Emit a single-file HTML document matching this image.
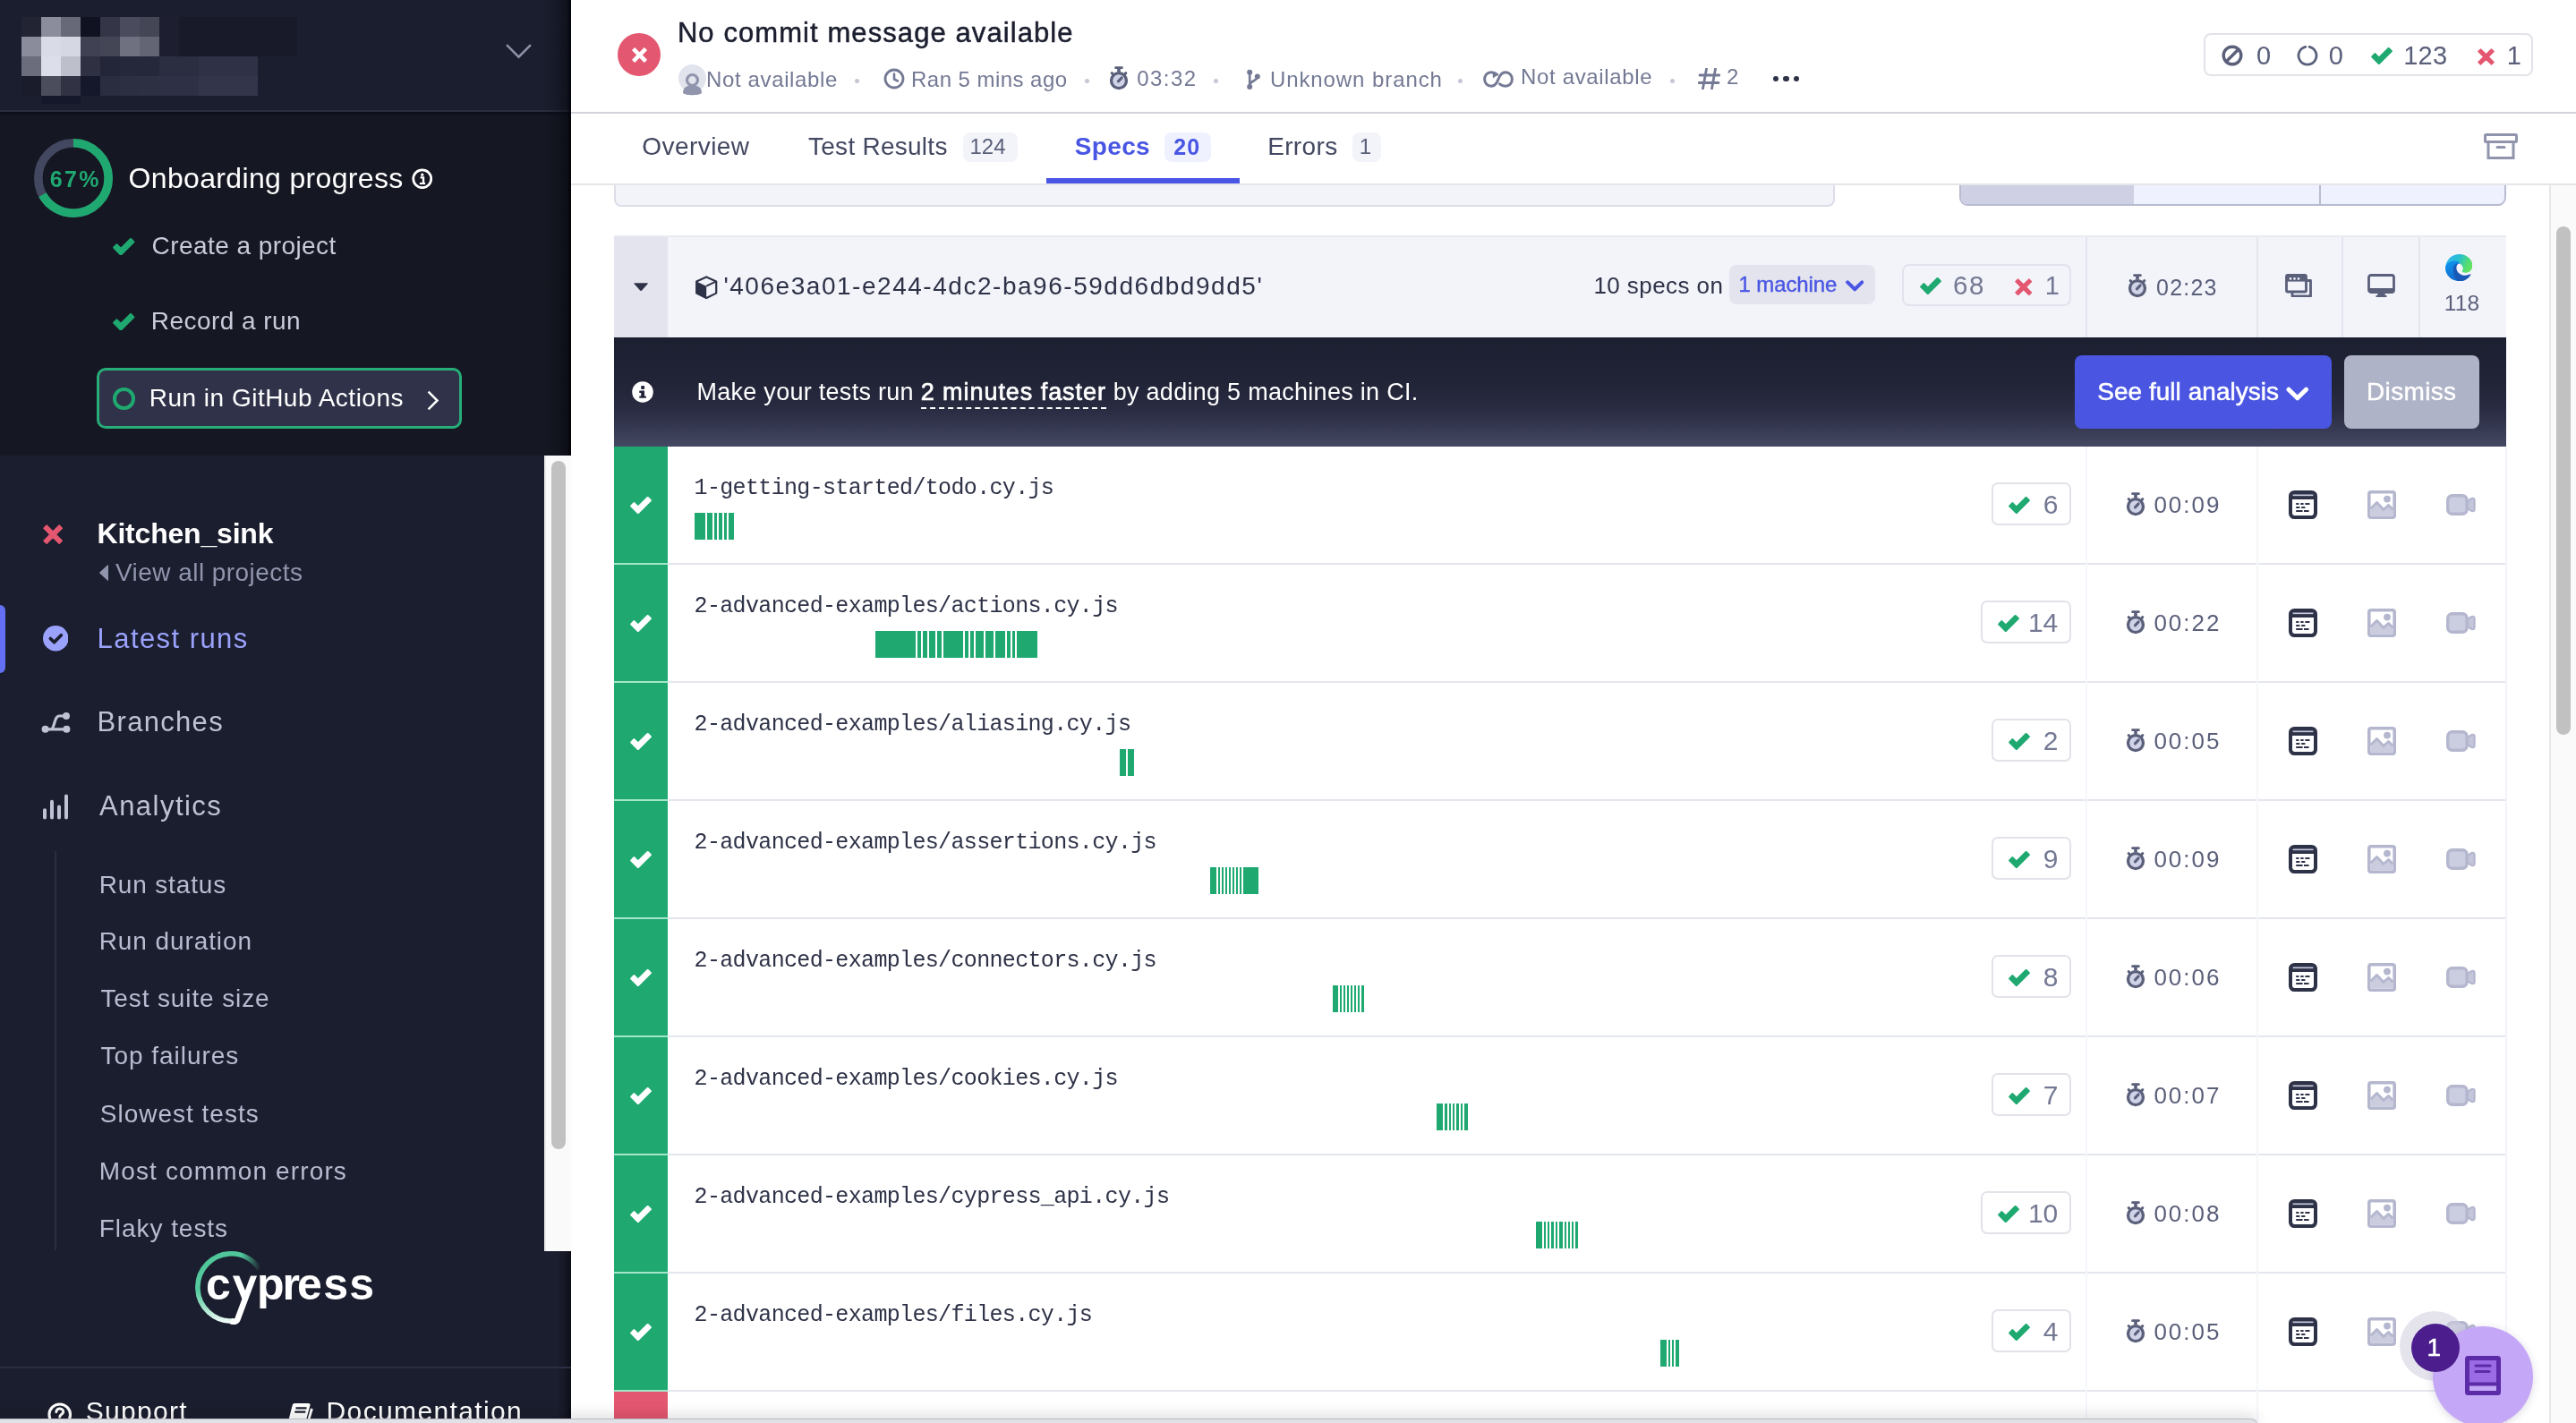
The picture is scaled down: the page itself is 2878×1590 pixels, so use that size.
<!DOCTYPE html><html><head><meta charset="utf-8"><title>Cypress Cloud</title><style>
*{box-sizing:border-box;margin:0;padding:0}
html,body{width:2878px;height:1590px;overflow:hidden;background:#fff}
body{font-family:"Liberation Sans",sans-serif;position:relative;will-change:transform}
.a{position:absolute;display:block}
.t{position:absolute;white-space:pre}
</style></head><body>
<div class="a" id="main" style="left:638px;top:0;width:2240px;height:1590px;background:#fff;overflow:hidden">
</div>
<div class="a" style="left:638px;top:125px;width:2240px;height:2px;background:#d2d3da"></div>
<div class="a" style="left:690px;top:37px;width:48px;height:48px;border-radius:50%;background:#e45770"></div>
<svg class="a" style="left:705.5px;top:52.5px;" width="17" height="17" viewBox="0 0 14 14"><path d="M2.6 0.6 L7 5 L11.4 0.6 L13.4 2.6 L9 7 L13.4 11.4 L11.4 13.4 L7 9 L2.6 13.4 L0.6 11.4 L5 7 L0.6 2.6 Z" fill="#fff" stroke="#fff" stroke-width="0.9" stroke-linejoin="round"/></svg>
<div class="t" style="left:756.92px;top:17.3px;line-height:40px;font-size:31px;color:#1b1e2e;letter-spacing:1.08px;font-weight:400;-webkit-text-stroke:0.5px #1b1e2e;">No commit message available</div>
<div class="a" style="left:758px;top:72px;width:31px;height:31px;border-radius:50%;background:#e1e3ed"></div>
<svg class="a" style="left:761px;top:80px;" width="25" height="28" viewBox="0 0 25 28"><circle cx="12.5" cy="9.5" r="6" fill="#e1e3ed" stroke="#9095ad" stroke-width="3.2"/><path d="M2 24 C2 17 7 15.5 12.5 15.5 C18 15.5 23 17 23 24 C20 27 5 27 2 24 Z" fill="#9095ad"/></svg>
<div class="t" style="left:789.08px;top:68.5px;line-height:40px;font-size:24px;color:#747994;letter-spacing:0.62px;font-weight:400;">Not available</div>
<div class="a" style="left:954.9px;top:87.5px;width:5px;height:5px;border-radius:50%;background:#c5c7d6"></div>
<svg class="a" style="left:987px;top:75.5px;" width="24" height="24" viewBox="0 0 24 24"><circle cx="12" cy="12" r="10" fill="none" stroke="#747994" stroke-width="2.8"/><path d="M12 6.5 V12.5 L16 14.5" fill="none" stroke="#747994" stroke-width="2.6" stroke-linecap="round" stroke-linejoin="round"/></svg>
<div class="t" style="left:1018.08px;top:68.5px;line-height:40px;font-size:24px;color:#747994;letter-spacing:0.45px;font-weight:400;">Ran 5 mins ago</div>
<div class="a" style="left:1211.5px;top:87.5px;width:5px;height:5px;border-radius:50%;background:#c5c7d6"></div>
<svg class="a" style="left:1239px;top:73.5px;" width="22.0" height="27.0" viewBox="0 0 22 27"><rect x="6.2" y="0.3" width="9.6" height="2.8" rx="1.3" fill="#5a5f7a"/><rect x="9.2" y="1.5" width="3.6" height="5" fill="#5a5f7a"/><path d="M3.2 7.6 L4.6 9 M18.8 7.6 L17.4 9" stroke="#5a5f7a" stroke-width="3" stroke-linecap="round"/><circle cx="11" cy="16.1" r="8.5" fill="#d0d3e8" stroke="#5a5f7a" stroke-width="3.3"/><path d="M10.4 16.9 L14.2 12.9" stroke="#5a5f7a" stroke-width="3" stroke-linecap="round"/></svg>
<div class="t" style="left:1270.16px;top:68.3px;line-height:40px;font-size:24px;color:#747994;letter-spacing:1.48px;font-weight:400;">03:32</div>
<div class="a" style="left:1355.5px;top:87.5px;width:5px;height:5px;border-radius:50%;background:#c5c7d6"></div>
<svg class="a" style="left:1391.5px;top:77px;" width="17" height="24" viewBox="0 0 17 24"><circle cx="4.2" cy="3.8" r="3" fill="#747994"/><circle cx="4.2" cy="20" r="3" fill="#747994"/><circle cx="12.8" cy="8.6" r="3" fill="#747994"/><path d="M4.2 3.8 V20 M12.8 8.6 C12.8 14 4.2 13 4.2 18" fill="none" stroke="#747994" stroke-width="2.6"/></svg>
<div class="t" style="left:1418.9px;top:68.5px;line-height:40px;font-size:24px;color:#747994;letter-spacing:0.92px;font-weight:400;">Unknown branch</div>
<div class="a" style="left:1629.2px;top:87.5px;width:5px;height:5px;border-radius:50%;background:#c5c7d6"></div>
<svg class="a" style="left:1657px;top:79px;" width="34" height="19" viewBox="0 0 34 19"><path d="M15.5 4.2 C13.6 2.6 11.4 1.8 9 1.8 C4.6 1.8 1.6 5.2 1.6 9.5 C1.6 13.8 4.8 17.2 9 17.2 C13 17.2 15.2 14.6 17 9.5 C18.8 4.4 21 1.8 25 1.8 C29.2 1.8 32.4 5.2 32.4 9.5 C32.4 13.8 29.4 17.2 25 17.2 C22.6 17.2 20.4 16.4 18.5 14.8" fill="none" stroke="#747994" stroke-width="3" stroke-linecap="round"/><path d="M10.5 1 L16.5 4.6 L11 8.6 Z" fill="#747994"/></svg>
<div class="t" style="left:1699.08px;top:66.0px;line-height:40px;font-size:24px;color:#747994;letter-spacing:0.65px;font-weight:400;">Not available</div>
<div class="a" style="left:1865.5px;top:87.5px;width:5px;height:5px;border-radius:50%;background:#c5c7d6"></div>
<svg class="a" style="left:1897px;top:76px;" width="25" height="24" viewBox="0 0 25 24"><path d="M9.5 1 L5.5 23 M19.5 1 L15.5 23 M2 8 H24 M1 16.5 H23" fill="none" stroke="#747994" stroke-width="2.8" stroke-linecap="round"/></svg>
<div class="t" style="left:1929.1px;top:65.6px;line-height:40px;font-size:24px;color:#747994;letter-spacing:0px;font-weight:400;">2</div>
<div class="a" style="left:1980.5px;top:84.9px;width:6.6px;height:6.6px;border-radius:50%;background:#2e3247"></div>
<div class="a" style="left:1992.1000000000001px;top:84.9px;width:6.6px;height:6.6px;border-radius:50%;background:#2e3247"></div>
<div class="a" style="left:2003.7px;top:84.9px;width:6.6px;height:6.6px;border-radius:50%;background:#2e3247"></div>
<div class="a" style="left:2462px;top:37px;width:368px;height:48px;border:2px solid #e2e3e8;border-radius:8px;background:#fff"></div>
<svg class="a" style="left:2482px;top:49.7px;" width="24" height="24" viewBox="0 0 24 24"><circle cx="12" cy="12" r="9.8" fill="none" stroke="#5a5f7a" stroke-width="3.4"/><path d="M5.5 18.5 L18.5 5.5" stroke="#5a5f7a" stroke-width="3.4"/></svg>
<div class="t" style="left:2520.99px;top:42.0px;line-height:40px;font-size:29px;color:#5a5f7a;letter-spacing:0px;font-weight:400;">0</div>
<svg class="a" style="left:2565.5px;top:50px;" width="24" height="24" viewBox="0 0 24 24"><path d="M14.2 2.4 A10 10 0 1 1 9.8 2.4" fill="none" stroke="#5a5f7a" stroke-width="2.8" stroke-linecap="round"/></svg>
<div class="t" style="left:2601.68px;top:42.0px;line-height:40px;font-size:29px;color:#5a5f7a;letter-spacing:0px;font-weight:400;">0</div>
<svg class="a" style="left:2649px;top:52.5px;" width="24" height="19.2" viewBox="0 0 16 12.8"><path d="M0.9 7 L2.9 4.9 L5.9 7.9 L13.1 0.8 L15.1 2.8 L5.9 12 Z" fill="#1fa971" stroke="#1fa971" stroke-width="1.6" stroke-linejoin="round"/></svg>
<div class="t" style="left:2685.22px;top:42.0px;line-height:40px;font-size:29px;color:#5a5f7a;letter-spacing:0.2px;font-weight:400;">123</div>
<svg class="a" style="left:2767.5px;top:53.5px;" width="19" height="19" viewBox="0 0 14 14"><path d="M2.6 0.6 L7 5 L11.4 0.6 L13.4 2.6 L9 7 L13.4 11.4 L11.4 13.4 L7 9 L2.6 13.4 L0.6 11.4 L5 7 L0.6 2.6 Z" fill="#e45770" stroke="#e45770" stroke-width="0.9" stroke-linejoin="round"/></svg>
<div class="t" style="left:2800.82px;top:42.0px;line-height:40px;font-size:29px;color:#5a5f7a;letter-spacing:0px;font-weight:400;">1</div>
<div class="t" style="left:717.24px;top:144.0px;line-height:40px;font-size:28px;color:#434861;letter-spacing:0.45px;font-weight:400;">Overview</div>
<div class="t" style="left:903.04px;top:144.0px;line-height:40px;font-size:28px;color:#434861;letter-spacing:0.26px;font-weight:400;">Test Results</div>
<div class="a" style="left:1075.5px;top:148px;width:61px;height:32.5px;border-radius:8px;background:#f3f4fa"></div><div class="t" style="left:1083.5px;top:144.2px;line-height:40px;font-size:24px;color:#5a5f7a;letter-spacing:0px;font-weight:400;">124</div>
<div class="t" style="left:1200.8px;top:144.0px;line-height:40px;font-size:28px;color:#4956e3;letter-spacing:0.34px;font-weight:700;">Specs</div>
<div class="a" style="left:1301px;top:148px;width:52px;height:32.5px;border-radius:8px;background:#f0f1ff"></div><div class="t" style="left:1311.25px;top:144.2px;line-height:40px;font-size:25px;color:#4956e3;letter-spacing:1.0px;font-weight:700;">20</div>
<div class="t" style="left:1416.16px;top:144.0px;line-height:40px;font-size:28px;color:#434861;letter-spacing:0.35px;font-weight:400;">Errors</div>
<div class="a" style="left:1510.8px;top:148px;width:32px;height:32.5px;border-radius:8px;background:#f3f4fa"></div><div class="t" style="left:1518.7px;top:144.2px;line-height:40px;font-size:24px;color:#5a5f7a;letter-spacing:0px;font-weight:400;">1</div>
<div class="a" style="left:638px;top:205px;width:2240px;height:2px;background:#e6e6ea"></div>
<div class="a" style="left:1169px;top:199px;width:216px;height:6.4px;background:#4956e3"></div>
<svg class="a" style="left:2775px;top:149px;" width="38" height="29" viewBox="0 0 38 29"><rect x="1.5" y="1.5" width="35" height="8" rx="1" fill="none" stroke="#9095ad" stroke-width="3"/><path d="M5 9.5 V27.5 H33 V9.5" fill="none" stroke="#9095ad" stroke-width="3"/><path d="M15 15.5 H23" stroke="#9095ad" stroke-width="3" stroke-linecap="round"/></svg>
<div class="a" style="left:686px;top:190px;width:1364px;height:41px;border:2px solid #dcdde8;border-radius:8px;background:#f3f4fa;clip-path:inset(17px 0 0 0)"></div>
<div class="a" style="left:2189px;top:180px;width:611px;height:50px;border:2px solid #b9bcd0;border-radius:9px;background:#f0f1ff;overflow:hidden;clip-path:inset(27px 0 0 0)"><div class="a" style="left:-2px;top:-2px;width:195px;height:50px;background:#cfd0e3"></div><div class="a" style="left:399.5px;top:-2px;width:2px;height:50px;background:#b9bcd0"></div></div>
<div class="a" style="left:686px;top:263px;width:2114px;height:114px;background:#f3f4fa;border-top:2px solid #e9eaf1"></div>
<div class="a" style="left:686px;top:265px;width:60px;height:112px;background:#e3e4ee"></div>
<svg class="a" style="left:708px;top:316.2px;" width="16.2" height="9.4" viewBox="0 0 18 10.5"><path d="M1 0.3 H17 Q18.3 0.3 17.4 1.3 L9.8 9.8 Q9 10.6 8.2 9.8 L0.6 1.3 Q-0.3 0.3 1 0.3 Z" fill="#2e3247"/></svg>
<svg class="a" style="left:775.6px;top:307.6px;" width="26.4" height="26.4" viewBox="0 0 27 28"><path d="M13.5 1.5 L25.2 6.8 V20.8 L13.5 26.6 L1.8 20.8 V6.8 Z" fill="#f3f4fa" stroke="#2e3247" stroke-width="2.3" stroke-linejoin="round"/><path d="M1.8 6.8 L13.5 12.4 V26.6 L1.8 20.8 Z" fill="#2e3247"/><path d="M13.5 12.4 L25.2 6.8" stroke="#2e3247" stroke-width="2.2"/></svg>
<div class="t" style="left:808.4px;top:300.2px;line-height:40px;font-size:28px;color:#2e3247;letter-spacing:1.53px;font-weight:400;">&#x27;406e3a01-e244-4dc2-ba96-59dd6dbd9dd5&#x27;</div>
<div class="t" style="left:1780.45px;top:298.6px;line-height:40px;font-size:26px;color:#2e3247;letter-spacing:0.42px;font-weight:400;">10 specs on</div>
<div class="a" style="left:1932px;top:296px;width:163px;height:44px;border-radius:8px;background:#e3e4ee"></div>
<div class="t" style="left:1942.5px;top:298.4px;line-height:40px;font-size:24px;color:#4956e3;letter-spacing:-0.1px;font-weight:400;-webkit-text-stroke:0.4px #4956e3;">1 machine</div>
<svg class="a" style="left:2061.5px;top:313px;" width="20.5" height="13" viewBox="0 0 20.5 13"><path d="M2.2 2.4 L10.25 10.3 L18.3 2.4" fill="none" stroke="#4956e3" stroke-width="4" stroke-linecap="round" stroke-linejoin="round"/></svg>
<div class="a" style="left:2125px;top:294.5px;width:189px;height:47px;border:2px solid #e1e3ed;border-radius:8px"></div>
<svg class="a" style="left:2144.5px;top:310px;" width="24" height="19.2" viewBox="0 0 16 12.8"><path d="M0.9 7 L2.9 4.9 L5.9 7.9 L13.1 0.8 L15.1 2.8 L5.9 12 Z" fill="#1fa971" stroke="#1fa971" stroke-width="1.6" stroke-linejoin="round"/></svg>
<div class="t" style="left:2182.12px;top:299.4px;line-height:40px;font-size:29.5px;color:#747994;letter-spacing:1.5px;font-weight:400;">68</div>
<svg class="a" style="left:2251px;top:310.5px;" width="19.5" height="19.5" viewBox="0 0 14 14"><path d="M2.6 0.6 L7 5 L11.4 0.6 L13.4 2.6 L9 7 L13.4 11.4 L11.4 13.4 L7 9 L2.6 13.4 L0.6 11.4 L5 7 L0.6 2.6 Z" fill="#e45770" stroke="#e45770" stroke-width="0.9" stroke-linejoin="round"/></svg>
<div class="t" style="left:2284.82px;top:299.4px;line-height:40px;font-size:29px;color:#747994;letter-spacing:0px;font-weight:400;">1</div>
<div class="a" style="left:2330px;top:265px;width:2px;height:112px;background:#e4e5ee"></div>
<div class="a" style="left:2520.5px;top:265px;width:2px;height:112px;background:#e4e5ee"></div>
<div class="a" style="left:2616.2px;top:265px;width:2px;height:112px;background:#e4e5ee"></div>
<div class="a" style="left:2701.5px;top:265px;width:2px;height:112px;background:#e4e5ee"></div>
<svg class="a" style="left:2377px;top:305.6px;" width="22.0" height="27.0" viewBox="0 0 22 27"><rect x="6.2" y="0.3" width="9.6" height="2.8" rx="1.3" fill="#5a5f7a"/><rect x="9.2" y="1.5" width="3.6" height="5" fill="#5a5f7a"/><path d="M3.2 7.6 L4.6 9 M18.8 7.6 L17.4 9" stroke="#5a5f7a" stroke-width="3" stroke-linecap="round"/><circle cx="11" cy="16.1" r="8.5" fill="#d0d3e8" stroke="#5a5f7a" stroke-width="3.3"/><path d="M10.4 16.9 L14.2 12.9" stroke="#5a5f7a" stroke-width="3" stroke-linecap="round"/></svg>
<div class="t" style="left:2409.12px;top:301.2px;line-height:40px;font-size:25px;color:#5a5f7a;letter-spacing:1.18px;font-weight:400;">02:23</div>
<svg class="a" style="left:2553px;top:305.5px;" width="30" height="26.5" viewBox="0 0 30 26.5"><path d="M8 21 V25 H28.5 V7.5 H25" fill="none" stroke="#5a5f7a" stroke-width="2.8" stroke-linejoin="round"/><rect x="1.5" y="1.5" width="22" height="18.5" rx="1.5" fill="#f3f4fa" stroke="#5a5f7a" stroke-width="2.8"/><path d="M1.5 3 H23.5 V8.6 H1.5 Z" fill="#5a5f7a"/><circle cx="6" cy="5.4" r="1.3" fill="#f3f4fa"/><circle cx="10.5" cy="5.4" r="1.3" fill="#f3f4fa"/><circle cx="15" cy="5.4" r="1.3" fill="#f3f4fa"/></svg>
<svg class="a" style="left:2644.5px;top:305.5px;" width="31" height="26.5" viewBox="0 0 31 26.5"><rect x="1.5" y="1.5" width="28" height="19" rx="2.5" fill="#f3f4fa" stroke="#5a5f7a" stroke-width="2.8"/><path d="M1.5 16 H29.5 V19 Q29.5 20.5 28 20.5 H3 Q1.5 20.5 1.5 19 Z" fill="#5a5f7a"/><path d="M12 21 L11 24 H9.5 V26.3 H21.5 V24 H20 L19 21 Z" fill="#5a5f7a"/></svg>
<div class="t" style="left:2730.66px;top:319.0px;line-height:40px;font-size:24.5px;color:#5a5f7a;letter-spacing:0.25px;font-weight:400;">118</div>
<svg class="a" style="left:2731.8px;top:283.6px" width="30.4" height="30.4" viewBox="0 0 30 30">
<defs>
<linearGradient id="e1" x1="0" y1="0.2" x2="1" y2="0.55"><stop offset="0" stop-color="#36b4f2"/><stop offset="0.45" stop-color="#27bfd0"/><stop offset="0.8" stop-color="#52dc78"/><stop offset="1" stop-color="#64e35f"/></linearGradient>
<linearGradient id="e2" x1="0.2" y1="0" x2="0.6" y2="1"><stop offset="0" stop-color="#0e95ef"/><stop offset="1" stop-color="#1466c8"/></linearGradient>
</defs>
<path d="M0.4 13 C1.6 5.2 8 0 15.4 0 C24 0 30 6.2 30 12.6 C30 17.6 26.2 20.4 22.2 20.4 C19.6 20.4 18 19.6 18.6 18.6 C19.8 17 19.9 14.6 18.4 12.6 C16.6 10.2 13.6 9.2 10.4 9.4 C5.6 9.7 1.6 12.4 0.4 13 Z" fill="url(#e1)"/>
<path d="M0.2 13.4 C1.8 9.4 6.2 7.2 10.6 7.4 C13.4 7.5 15.4 8.6 16.2 10.2 C12 10.6 9.4 14 9.6 18 C9.9 23.6 14.6 28 20.6 29 C11.6 32 1 26.4 0.05 16.4 C0 15.4 0.05 14.4 0.2 13.4 Z" fill="url(#e2)"/>
<path d="M8.8 16.4 C8.7 12.6 11.6 9.9 14.6 10 C12.2 12 11.6 15.2 13 18.2 C15 22.4 20.4 24.6 25.4 22.8 C26.8 22.3 27.8 21.6 28.2 22.2 C26.2 27 21 30.1 15.8 29.9 C11 29 8.9 22.4 8.8 16.4 Z" fill="#1a58b6"/>
</svg>
<div class="a" style="left:686px;top:377px;width:2114px;height:122px;background:linear-gradient(180deg,#1c1f30 0%,#222538 45%,#2b2e44 70%,#3d415a 92%,#454963 100%)"></div>
<svg class="a" style="left:706px;top:426.4px;" width="24" height="24" viewBox="0 0 24 24"><circle cx="12" cy="12" r="11.8" fill="#fff"/><rect x="10.2" y="5" width="3.9" height="3.9" rx="1.2" fill="#22253a"/><path d="M8.3 10.6 H14 V16.4 H15.8 V18.8 H8.3 V16.4 H10.2 V13 H8.3 Z" fill="#22253a"/></svg>
<div class="t" style="left:778.44px;top:417.8px;line-height:40px;font-size:27px;color:#fff;letter-spacing:0.28px;font-weight:400;">Make your tests run <span style="font-weight:400;-webkit-text-stroke:0.7px #fff;letter-spacing:0.95px;border-bottom:2.5px dashed #fff;padding-bottom:0px;display:inline-block;line-height:33px">2 minutes faster</span> by adding 5 machines in CI.</div>
<div class="a" style="left:2318px;top:397px;width:287px;height:82px;border-radius:8px;background:#4a56e2"></div>
<div class="t" style="left:2343.24px;top:418.0px;line-height:40px;font-size:28px;color:#fff;letter-spacing:0.03px;font-weight:400;-webkit-text-stroke:0.5px #fff;">See full analysis</div>
<svg class="a" style="left:2553.5px;top:431.5px;" width="25.5" height="16.5" viewBox="0 0 25.5 16.5"><path d="M3 3.2 L12.75 12.8 L22.5 3.2" fill="none" stroke="#fff" stroke-width="5" stroke-linecap="round" stroke-linejoin="round"/></svg>
<div class="a" style="left:2619px;top:397px;width:151px;height:82px;border-radius:8px;background:#afb3c7"></div>
<div class="t" style="left:2644.06px;top:418.0px;line-height:40px;font-size:28px;color:#fff;letter-spacing:0.33px;font-weight:400;-webkit-text-stroke:0.4px #fff;">Dismiss</div>
<div class="a" style="left:686px;top:499px;width:60px;height:132px;background:#1fa971;border-bottom:2px solid #a5e6cb"></div>
<div class="a" style="left:746px;top:629px;width:2054px;height:2px;background:#e4e6ee"></div>
<svg class="a" style="left:704px;top:555px;" width="24" height="19.2" viewBox="0 0 16 12.8"><path d="M0.9 7 L2.9 4.9 L5.9 7.9 L13.1 0.8 L15.1 2.8 L5.9 12 Z" fill="#fff" stroke="#fff" stroke-width="1.6" stroke-linejoin="round"/></svg>
<div class="t" style="left:775.6px;top:525.7px;line-height:40px;font-family:'Liberation Mono',monospace;font-size:25px;letter-spacing:-0.66px;color:#2e3247">1-getting-started/todo.cy.js</div>
<div class="a" style="left:776px;top:573px;width:12px;height:30px;background:#1fa971"></div>
<div class="a" style="left:790px;top:573px;width:6px;height:30px;background:#1fa971"></div>
<div class="a" style="left:798px;top:573px;width:3px;height:30px;background:#1fa971"></div>
<div class="a" style="left:803px;top:573px;width:4px;height:30px;background:#1fa971"></div>
<div class="a" style="left:809px;top:573px;width:3px;height:30px;background:#1fa971"></div>
<div class="a" style="left:814px;top:573px;width:6px;height:30px;background:#1fa971"></div>
<div class="a" style="left:2224.7px;top:539.3px;width:89px;height:47.4px;border:2px solid #e2e3e9;border-radius:7px;background:#fff"></div>
<svg class="a" style="left:2243.8999999999996px;top:555px;" width="24" height="19.2" viewBox="0 0 16 12.8"><path d="M0.9 7 L2.9 4.9 L5.9 7.9 L13.1 0.8 L15.1 2.8 L5.9 12 Z" fill="#1fa971" stroke="#1fa971" stroke-width="1.6" stroke-linejoin="round"/></svg>
<div class="t" style="right:578.6999999999998px;top:544.4px;line-height:40px;font-size:30px;color:#747994;letter-spacing:0px">6</div>
<svg class="a" style="left:2375px;top:549.7px;" width="22.0" height="27.0" viewBox="0 0 22 27"><rect x="6.2" y="0.3" width="9.6" height="2.8" rx="1.3" fill="#5a5f7a"/><rect x="9.2" y="1.5" width="3.6" height="5" fill="#5a5f7a"/><path d="M3.2 7.6 L4.6 9 M18.8 7.6 L17.4 9" stroke="#5a5f7a" stroke-width="3" stroke-linecap="round"/><circle cx="11" cy="16.1" r="8.5" fill="#d0d3e8" stroke="#5a5f7a" stroke-width="3.3"/><path d="M10.4 16.9 L14.2 12.9" stroke="#5a5f7a" stroke-width="3" stroke-linecap="round"/></svg>
<div class="t" style="left:2406.39px;top:544.4px;line-height:40px;font-size:26px;color:#5a5f7a;letter-spacing:2.0px;font-weight:400;">00:09</div>
<svg class="a" style="left:2557px;top:548px;" width="32" height="32" viewBox="0 0 32 32"><rect x="2" y="2" width="28" height="28" rx="4.4" fill="#fff" stroke="#2e3247" stroke-width="4"/><path d="M2 4 H30 V10 H2 Z" fill="#2e3247"/><path d="M4.6 5.3 H27.4" stroke="#c5c7dc" stroke-width="1.7"/><path d="M8.2 14.9 H11.4 M13.3 14.9 H16.6 M18.4 14.9 H23.5 M8.2 19 H12.4 M14.2 19 H18.4 M8.2 23 H15.6 M17 23 H22.6" stroke="#2e3247" stroke-width="2"/></svg>
<svg class="a" style="left:2645px;top:548px;" width="32" height="32" viewBox="0 0 32 32"><rect x="1.8" y="1.8" width="28.4" height="28.4" rx="2.2" fill="#fff" stroke="#b4b7ce" stroke-width="3.6"/><path d="M3.5 22 L10.5 14.5 L17.5 22 L23.5 17 L28.5 22.5 V28.5 H3.5 Z" fill="#cbcddf"/><path d="M3.5 20.5 L10.5 13.5 L18 21.5 L23.5 16.5 L28.5 21.5" fill="none" stroke="#b4b7ce" stroke-width="3" stroke-linejoin="round"/><circle cx="22" cy="9.6" r="3.9" fill="#b4b7ce"/></svg>
<svg class="a" style="left:2732.6px;top:552px;" width="33" height="24" viewBox="0 0 33 24"><path d="M23.5 8.2 L28.5 5 Q31.6 4.2 31.6 7 V17 Q31.6 19.8 28.5 19 L23.5 15.8 Z" fill="#c4c6da" stroke="#b4b7ce" stroke-width="2.2" stroke-linejoin="round"/><rect x="1.7" y="1.7" width="21.4" height="20.6" rx="5" fill="#cbcde0" stroke="#b4b7ce" stroke-width="3.4"/></svg>
<div class="a" style="left:686px;top:631px;width:60px;height:132px;background:#1fa971;border-bottom:2px solid #a5e6cb"></div>
<div class="a" style="left:746px;top:761px;width:2054px;height:2px;background:#e4e6ee"></div>
<svg class="a" style="left:704px;top:687px;" width="24" height="19.2" viewBox="0 0 16 12.8"><path d="M0.9 7 L2.9 4.9 L5.9 7.9 L13.1 0.8 L15.1 2.8 L5.9 12 Z" fill="#fff" stroke="#fff" stroke-width="1.6" stroke-linejoin="round"/></svg>
<div class="t" style="left:775.6px;top:657.7px;line-height:40px;font-family:'Liberation Mono',monospace;font-size:25px;letter-spacing:-0.66px;color:#2e3247">2-advanced-examples/actions.cy.js</div>
<div class="a" style="left:978px;top:705px;width:45px;height:30px;background:#1fa971"></div>
<div class="a" style="left:1025px;top:705px;width:4px;height:30px;background:#1fa971"></div>
<div class="a" style="left:1031px;top:705px;width:5px;height:30px;background:#1fa971"></div>
<div class="a" style="left:1038px;top:705px;width:7px;height:30px;background:#1fa971"></div>
<div class="a" style="left:1047px;top:705px;width:5px;height:30px;background:#1fa971"></div>
<div class="a" style="left:1054px;top:705px;width:22px;height:30px;background:#1fa971"></div>
<div class="a" style="left:1078px;top:705px;width:4px;height:30px;background:#1fa971"></div>
<div class="a" style="left:1084px;top:705px;width:4px;height:30px;background:#1fa971"></div>
<div class="a" style="left:1090px;top:705px;width:8.5px;height:30px;background:#1fa971"></div>
<div class="a" style="left:1100.5px;top:705px;width:9px;height:30px;background:#1fa971"></div>
<div class="a" style="left:1111.5px;top:705px;width:11px;height:30px;background:#1fa971"></div>
<div class="a" style="left:1124.5px;top:705px;width:4px;height:30px;background:#1fa971"></div>
<div class="a" style="left:1130.5px;top:705px;width:3px;height:30px;background:#1fa971"></div>
<div class="a" style="left:1135.5px;top:705px;width:23px;height:30px;background:#1fa971"></div>
<div class="a" style="left:2212.7px;top:671.3px;width:101px;height:47.4px;border:2px solid #e2e3e9;border-radius:7px;background:#fff"></div>
<svg class="a" style="left:2231.8999999999996px;top:687px;" width="24" height="19.2" viewBox="0 0 16 12.8"><path d="M0.9 7 L2.9 4.9 L5.9 7.9 L13.1 0.8 L15.1 2.8 L5.9 12 Z" fill="#1fa971" stroke="#1fa971" stroke-width="1.6" stroke-linejoin="round"/></svg>
<div class="t" style="right:578.6999999999998px;top:676.4px;line-height:40px;font-size:30px;color:#747994;letter-spacing:0px">14</div>
<svg class="a" style="left:2375px;top:681.7px;" width="22.0" height="27.0" viewBox="0 0 22 27"><rect x="6.2" y="0.3" width="9.6" height="2.8" rx="1.3" fill="#5a5f7a"/><rect x="9.2" y="1.5" width="3.6" height="5" fill="#5a5f7a"/><path d="M3.2 7.6 L4.6 9 M18.8 7.6 L17.4 9" stroke="#5a5f7a" stroke-width="3" stroke-linecap="round"/><circle cx="11" cy="16.1" r="8.5" fill="#d0d3e8" stroke="#5a5f7a" stroke-width="3.3"/><path d="M10.4 16.9 L14.2 12.9" stroke="#5a5f7a" stroke-width="3" stroke-linecap="round"/></svg>
<div class="t" style="left:2406.39px;top:676.4px;line-height:40px;font-size:26px;color:#5a5f7a;letter-spacing:2.0px;font-weight:400;">00:22</div>
<svg class="a" style="left:2557px;top:680px;" width="32" height="32" viewBox="0 0 32 32"><rect x="2" y="2" width="28" height="28" rx="4.4" fill="#fff" stroke="#2e3247" stroke-width="4"/><path d="M2 4 H30 V10 H2 Z" fill="#2e3247"/><path d="M4.6 5.3 H27.4" stroke="#c5c7dc" stroke-width="1.7"/><path d="M8.2 14.9 H11.4 M13.3 14.9 H16.6 M18.4 14.9 H23.5 M8.2 19 H12.4 M14.2 19 H18.4 M8.2 23 H15.6 M17 23 H22.6" stroke="#2e3247" stroke-width="2"/></svg>
<svg class="a" style="left:2645px;top:680px;" width="32" height="32" viewBox="0 0 32 32"><rect x="1.8" y="1.8" width="28.4" height="28.4" rx="2.2" fill="#fff" stroke="#b4b7ce" stroke-width="3.6"/><path d="M3.5 22 L10.5 14.5 L17.5 22 L23.5 17 L28.5 22.5 V28.5 H3.5 Z" fill="#cbcddf"/><path d="M3.5 20.5 L10.5 13.5 L18 21.5 L23.5 16.5 L28.5 21.5" fill="none" stroke="#b4b7ce" stroke-width="3" stroke-linejoin="round"/><circle cx="22" cy="9.6" r="3.9" fill="#b4b7ce"/></svg>
<svg class="a" style="left:2732.6px;top:684px;" width="33" height="24" viewBox="0 0 33 24"><path d="M23.5 8.2 L28.5 5 Q31.6 4.2 31.6 7 V17 Q31.6 19.8 28.5 19 L23.5 15.8 Z" fill="#c4c6da" stroke="#b4b7ce" stroke-width="2.2" stroke-linejoin="round"/><rect x="1.7" y="1.7" width="21.4" height="20.6" rx="5" fill="#cbcde0" stroke="#b4b7ce" stroke-width="3.4"/></svg>
<div class="a" style="left:686px;top:763px;width:60px;height:132px;background:#1fa971;border-bottom:2px solid #a5e6cb"></div>
<div class="a" style="left:746px;top:893px;width:2054px;height:2px;background:#e4e6ee"></div>
<svg class="a" style="left:704px;top:819px;" width="24" height="19.2" viewBox="0 0 16 12.8"><path d="M0.9 7 L2.9 4.9 L5.9 7.9 L13.1 0.8 L15.1 2.8 L5.9 12 Z" fill="#fff" stroke="#fff" stroke-width="1.6" stroke-linejoin="round"/></svg>
<div class="t" style="left:775.6px;top:789.7px;line-height:40px;font-family:'Liberation Mono',monospace;font-size:25px;letter-spacing:-0.66px;color:#2e3247">2-advanced-examples/aliasing.cy.js</div>
<div class="a" style="left:1251px;top:837px;width:7px;height:30px;background:#1fa971"></div>
<div class="a" style="left:1260px;top:837px;width:7px;height:30px;background:#1fa971"></div>
<div class="a" style="left:2224.7px;top:803.3px;width:89px;height:47.4px;border:2px solid #e2e3e9;border-radius:7px;background:#fff"></div>
<svg class="a" style="left:2243.8999999999996px;top:819px;" width="24" height="19.2" viewBox="0 0 16 12.8"><path d="M0.9 7 L2.9 4.9 L5.9 7.9 L13.1 0.8 L15.1 2.8 L5.9 12 Z" fill="#1fa971" stroke="#1fa971" stroke-width="1.6" stroke-linejoin="round"/></svg>
<div class="t" style="right:578.6999999999998px;top:808.4px;line-height:40px;font-size:30px;color:#747994;letter-spacing:0px">2</div>
<svg class="a" style="left:2375px;top:813.7px;" width="22.0" height="27.0" viewBox="0 0 22 27"><rect x="6.2" y="0.3" width="9.6" height="2.8" rx="1.3" fill="#5a5f7a"/><rect x="9.2" y="1.5" width="3.6" height="5" fill="#5a5f7a"/><path d="M3.2 7.6 L4.6 9 M18.8 7.6 L17.4 9" stroke="#5a5f7a" stroke-width="3" stroke-linecap="round"/><circle cx="11" cy="16.1" r="8.5" fill="#d0d3e8" stroke="#5a5f7a" stroke-width="3.3"/><path d="M10.4 16.9 L14.2 12.9" stroke="#5a5f7a" stroke-width="3" stroke-linecap="round"/></svg>
<div class="t" style="left:2406.39px;top:808.4px;line-height:40px;font-size:26px;color:#5a5f7a;letter-spacing:2.0px;font-weight:400;">00:05</div>
<svg class="a" style="left:2557px;top:812px;" width="32" height="32" viewBox="0 0 32 32"><rect x="2" y="2" width="28" height="28" rx="4.4" fill="#fff" stroke="#2e3247" stroke-width="4"/><path d="M2 4 H30 V10 H2 Z" fill="#2e3247"/><path d="M4.6 5.3 H27.4" stroke="#c5c7dc" stroke-width="1.7"/><path d="M8.2 14.9 H11.4 M13.3 14.9 H16.6 M18.4 14.9 H23.5 M8.2 19 H12.4 M14.2 19 H18.4 M8.2 23 H15.6 M17 23 H22.6" stroke="#2e3247" stroke-width="2"/></svg>
<svg class="a" style="left:2645px;top:812px;" width="32" height="32" viewBox="0 0 32 32"><rect x="1.8" y="1.8" width="28.4" height="28.4" rx="2.2" fill="#fff" stroke="#b4b7ce" stroke-width="3.6"/><path d="M3.5 22 L10.5 14.5 L17.5 22 L23.5 17 L28.5 22.5 V28.5 H3.5 Z" fill="#cbcddf"/><path d="M3.5 20.5 L10.5 13.5 L18 21.5 L23.5 16.5 L28.5 21.5" fill="none" stroke="#b4b7ce" stroke-width="3" stroke-linejoin="round"/><circle cx="22" cy="9.6" r="3.9" fill="#b4b7ce"/></svg>
<svg class="a" style="left:2732.6px;top:816px;" width="33" height="24" viewBox="0 0 33 24"><path d="M23.5 8.2 L28.5 5 Q31.6 4.2 31.6 7 V17 Q31.6 19.8 28.5 19 L23.5 15.8 Z" fill="#c4c6da" stroke="#b4b7ce" stroke-width="2.2" stroke-linejoin="round"/><rect x="1.7" y="1.7" width="21.4" height="20.6" rx="5" fill="#cbcde0" stroke="#b4b7ce" stroke-width="3.4"/></svg>
<div class="a" style="left:686px;top:895px;width:60px;height:132px;background:#1fa971;border-bottom:2px solid #a5e6cb"></div>
<div class="a" style="left:746px;top:1025px;width:2054px;height:2px;background:#e4e6ee"></div>
<svg class="a" style="left:704px;top:951px;" width="24" height="19.2" viewBox="0 0 16 12.8"><path d="M0.9 7 L2.9 4.9 L5.9 7.9 L13.1 0.8 L15.1 2.8 L5.9 12 Z" fill="#fff" stroke="#fff" stroke-width="1.6" stroke-linejoin="round"/></svg>
<div class="t" style="left:775.6px;top:921.7px;line-height:40px;font-family:'Liberation Mono',monospace;font-size:25px;letter-spacing:-0.66px;color:#2e3247">2-advanced-examples/assertions.cy.js</div>
<div class="a" style="left:1352px;top:969px;width:7px;height:30px;background:#1fa971"></div>
<div class="a" style="left:1361px;top:969px;width:2px;height:30px;background:#1fa971"></div>
<div class="a" style="left:1365px;top:969px;width:2px;height:30px;background:#1fa971"></div>
<div class="a" style="left:1369px;top:969px;width:2px;height:30px;background:#1fa971"></div>
<div class="a" style="left:1373px;top:969px;width:2px;height:30px;background:#1fa971"></div>
<div class="a" style="left:1377px;top:969px;width:2px;height:30px;background:#1fa971"></div>
<div class="a" style="left:1381px;top:969px;width:2px;height:30px;background:#1fa971"></div>
<div class="a" style="left:1385px;top:969px;width:2px;height:30px;background:#1fa971"></div>
<div class="a" style="left:1389px;top:969px;width:17px;height:30px;background:#1fa971"></div>
<div class="a" style="left:2224.7px;top:935.3px;width:89px;height:47.4px;border:2px solid #e2e3e9;border-radius:7px;background:#fff"></div>
<svg class="a" style="left:2243.8999999999996px;top:951px;" width="24" height="19.2" viewBox="0 0 16 12.8"><path d="M0.9 7 L2.9 4.9 L5.9 7.9 L13.1 0.8 L15.1 2.8 L5.9 12 Z" fill="#1fa971" stroke="#1fa971" stroke-width="1.6" stroke-linejoin="round"/></svg>
<div class="t" style="right:578.6999999999998px;top:940.4px;line-height:40px;font-size:30px;color:#747994;letter-spacing:0px">9</div>
<svg class="a" style="left:2375px;top:945.7px;" width="22.0" height="27.0" viewBox="0 0 22 27"><rect x="6.2" y="0.3" width="9.6" height="2.8" rx="1.3" fill="#5a5f7a"/><rect x="9.2" y="1.5" width="3.6" height="5" fill="#5a5f7a"/><path d="M3.2 7.6 L4.6 9 M18.8 7.6 L17.4 9" stroke="#5a5f7a" stroke-width="3" stroke-linecap="round"/><circle cx="11" cy="16.1" r="8.5" fill="#d0d3e8" stroke="#5a5f7a" stroke-width="3.3"/><path d="M10.4 16.9 L14.2 12.9" stroke="#5a5f7a" stroke-width="3" stroke-linecap="round"/></svg>
<div class="t" style="left:2406.39px;top:940.4px;line-height:40px;font-size:26px;color:#5a5f7a;letter-spacing:2.0px;font-weight:400;">00:09</div>
<svg class="a" style="left:2557px;top:944px;" width="32" height="32" viewBox="0 0 32 32"><rect x="2" y="2" width="28" height="28" rx="4.4" fill="#fff" stroke="#2e3247" stroke-width="4"/><path d="M2 4 H30 V10 H2 Z" fill="#2e3247"/><path d="M4.6 5.3 H27.4" stroke="#c5c7dc" stroke-width="1.7"/><path d="M8.2 14.9 H11.4 M13.3 14.9 H16.6 M18.4 14.9 H23.5 M8.2 19 H12.4 M14.2 19 H18.4 M8.2 23 H15.6 M17 23 H22.6" stroke="#2e3247" stroke-width="2"/></svg>
<svg class="a" style="left:2645px;top:944px;" width="32" height="32" viewBox="0 0 32 32"><rect x="1.8" y="1.8" width="28.4" height="28.4" rx="2.2" fill="#fff" stroke="#b4b7ce" stroke-width="3.6"/><path d="M3.5 22 L10.5 14.5 L17.5 22 L23.5 17 L28.5 22.5 V28.5 H3.5 Z" fill="#cbcddf"/><path d="M3.5 20.5 L10.5 13.5 L18 21.5 L23.5 16.5 L28.5 21.5" fill="none" stroke="#b4b7ce" stroke-width="3" stroke-linejoin="round"/><circle cx="22" cy="9.6" r="3.9" fill="#b4b7ce"/></svg>
<svg class="a" style="left:2732.6px;top:948px;" width="33" height="24" viewBox="0 0 33 24"><path d="M23.5 8.2 L28.5 5 Q31.6 4.2 31.6 7 V17 Q31.6 19.8 28.5 19 L23.5 15.8 Z" fill="#c4c6da" stroke="#b4b7ce" stroke-width="2.2" stroke-linejoin="round"/><rect x="1.7" y="1.7" width="21.4" height="20.6" rx="5" fill="#cbcde0" stroke="#b4b7ce" stroke-width="3.4"/></svg>
<div class="a" style="left:686px;top:1027px;width:60px;height:132px;background:#1fa971;border-bottom:2px solid #a5e6cb"></div>
<div class="a" style="left:746px;top:1157px;width:2054px;height:2px;background:#e4e6ee"></div>
<svg class="a" style="left:704px;top:1083px;" width="24" height="19.2" viewBox="0 0 16 12.8"><path d="M0.9 7 L2.9 4.9 L5.9 7.9 L13.1 0.8 L15.1 2.8 L5.9 12 Z" fill="#fff" stroke="#fff" stroke-width="1.6" stroke-linejoin="round"/></svg>
<div class="t" style="left:775.6px;top:1053.7px;line-height:40px;font-family:'Liberation Mono',monospace;font-size:25px;letter-spacing:-0.66px;color:#2e3247">2-advanced-examples/connectors.cy.js</div>
<div class="a" style="left:1489px;top:1101px;width:6px;height:30px;background:#1fa971"></div>
<div class="a" style="left:1497px;top:1101px;width:2px;height:30px;background:#1fa971"></div>
<div class="a" style="left:1501px;top:1101px;width:2px;height:30px;background:#1fa971"></div>
<div class="a" style="left:1505px;top:1101px;width:2px;height:30px;background:#1fa971"></div>
<div class="a" style="left:1509px;top:1101px;width:2px;height:30px;background:#1fa971"></div>
<div class="a" style="left:1513px;top:1101px;width:2px;height:30px;background:#1fa971"></div>
<div class="a" style="left:1517px;top:1101px;width:2px;height:30px;background:#1fa971"></div>
<div class="a" style="left:1521px;top:1101px;width:3px;height:30px;background:#1fa971"></div>
<div class="a" style="left:2224.7px;top:1067.3px;width:89px;height:47.4px;border:2px solid #e2e3e9;border-radius:7px;background:#fff"></div>
<svg class="a" style="left:2243.8999999999996px;top:1083px;" width="24" height="19.2" viewBox="0 0 16 12.8"><path d="M0.9 7 L2.9 4.9 L5.9 7.9 L13.1 0.8 L15.1 2.8 L5.9 12 Z" fill="#1fa971" stroke="#1fa971" stroke-width="1.6" stroke-linejoin="round"/></svg>
<div class="t" style="right:578.6999999999998px;top:1072.4px;line-height:40px;font-size:30px;color:#747994;letter-spacing:0px">8</div>
<svg class="a" style="left:2375px;top:1077.7px;" width="22.0" height="27.0" viewBox="0 0 22 27"><rect x="6.2" y="0.3" width="9.6" height="2.8" rx="1.3" fill="#5a5f7a"/><rect x="9.2" y="1.5" width="3.6" height="5" fill="#5a5f7a"/><path d="M3.2 7.6 L4.6 9 M18.8 7.6 L17.4 9" stroke="#5a5f7a" stroke-width="3" stroke-linecap="round"/><circle cx="11" cy="16.1" r="8.5" fill="#d0d3e8" stroke="#5a5f7a" stroke-width="3.3"/><path d="M10.4 16.9 L14.2 12.9" stroke="#5a5f7a" stroke-width="3" stroke-linecap="round"/></svg>
<div class="t" style="left:2406.39px;top:1072.4px;line-height:40px;font-size:26px;color:#5a5f7a;letter-spacing:2.0px;font-weight:400;">00:06</div>
<svg class="a" style="left:2557px;top:1076px;" width="32" height="32" viewBox="0 0 32 32"><rect x="2" y="2" width="28" height="28" rx="4.4" fill="#fff" stroke="#2e3247" stroke-width="4"/><path d="M2 4 H30 V10 H2 Z" fill="#2e3247"/><path d="M4.6 5.3 H27.4" stroke="#c5c7dc" stroke-width="1.7"/><path d="M8.2 14.9 H11.4 M13.3 14.9 H16.6 M18.4 14.9 H23.5 M8.2 19 H12.4 M14.2 19 H18.4 M8.2 23 H15.6 M17 23 H22.6" stroke="#2e3247" stroke-width="2"/></svg>
<svg class="a" style="left:2645px;top:1076px;" width="32" height="32" viewBox="0 0 32 32"><rect x="1.8" y="1.8" width="28.4" height="28.4" rx="2.2" fill="#fff" stroke="#b4b7ce" stroke-width="3.6"/><path d="M3.5 22 L10.5 14.5 L17.5 22 L23.5 17 L28.5 22.5 V28.5 H3.5 Z" fill="#cbcddf"/><path d="M3.5 20.5 L10.5 13.5 L18 21.5 L23.5 16.5 L28.5 21.5" fill="none" stroke="#b4b7ce" stroke-width="3" stroke-linejoin="round"/><circle cx="22" cy="9.6" r="3.9" fill="#b4b7ce"/></svg>
<svg class="a" style="left:2732.6px;top:1080px;" width="33" height="24" viewBox="0 0 33 24"><path d="M23.5 8.2 L28.5 5 Q31.6 4.2 31.6 7 V17 Q31.6 19.8 28.5 19 L23.5 15.8 Z" fill="#c4c6da" stroke="#b4b7ce" stroke-width="2.2" stroke-linejoin="round"/><rect x="1.7" y="1.7" width="21.4" height="20.6" rx="5" fill="#cbcde0" stroke="#b4b7ce" stroke-width="3.4"/></svg>
<div class="a" style="left:686px;top:1159px;width:60px;height:132px;background:#1fa971;border-bottom:2px solid #a5e6cb"></div>
<div class="a" style="left:746px;top:1289px;width:2054px;height:2px;background:#e4e6ee"></div>
<svg class="a" style="left:704px;top:1215px;" width="24" height="19.2" viewBox="0 0 16 12.8"><path d="M0.9 7 L2.9 4.9 L5.9 7.9 L13.1 0.8 L15.1 2.8 L5.9 12 Z" fill="#fff" stroke="#fff" stroke-width="1.6" stroke-linejoin="round"/></svg>
<div class="t" style="left:775.6px;top:1185.7px;line-height:40px;font-family:'Liberation Mono',monospace;font-size:25px;letter-spacing:-0.66px;color:#2e3247">2-advanced-examples/cookies.cy.js</div>
<div class="a" style="left:1605px;top:1233px;width:7px;height:30px;background:#1fa971"></div>
<div class="a" style="left:1614px;top:1233px;width:3px;height:30px;background:#1fa971"></div>
<div class="a" style="left:1619px;top:1233px;width:2px;height:30px;background:#1fa971"></div>
<div class="a" style="left:1623px;top:1233px;width:2px;height:30px;background:#1fa971"></div>
<div class="a" style="left:1627px;top:1233px;width:3px;height:30px;background:#1fa971"></div>
<div class="a" style="left:1632px;top:1233px;width:2px;height:30px;background:#1fa971"></div>
<div class="a" style="left:1636px;top:1233px;width:4px;height:30px;background:#1fa971"></div>
<div class="a" style="left:2224.7px;top:1199.3px;width:89px;height:47.4px;border:2px solid #e2e3e9;border-radius:7px;background:#fff"></div>
<svg class="a" style="left:2243.8999999999996px;top:1215px;" width="24" height="19.2" viewBox="0 0 16 12.8"><path d="M0.9 7 L2.9 4.9 L5.9 7.9 L13.1 0.8 L15.1 2.8 L5.9 12 Z" fill="#1fa971" stroke="#1fa971" stroke-width="1.6" stroke-linejoin="round"/></svg>
<div class="t" style="right:578.6999999999998px;top:1204.4px;line-height:40px;font-size:30px;color:#747994;letter-spacing:0px">7</div>
<svg class="a" style="left:2375px;top:1209.7px;" width="22.0" height="27.0" viewBox="0 0 22 27"><rect x="6.2" y="0.3" width="9.6" height="2.8" rx="1.3" fill="#5a5f7a"/><rect x="9.2" y="1.5" width="3.6" height="5" fill="#5a5f7a"/><path d="M3.2 7.6 L4.6 9 M18.8 7.6 L17.4 9" stroke="#5a5f7a" stroke-width="3" stroke-linecap="round"/><circle cx="11" cy="16.1" r="8.5" fill="#d0d3e8" stroke="#5a5f7a" stroke-width="3.3"/><path d="M10.4 16.9 L14.2 12.9" stroke="#5a5f7a" stroke-width="3" stroke-linecap="round"/></svg>
<div class="t" style="left:2406.39px;top:1204.4px;line-height:40px;font-size:26px;color:#5a5f7a;letter-spacing:2.0px;font-weight:400;">00:07</div>
<svg class="a" style="left:2557px;top:1208px;" width="32" height="32" viewBox="0 0 32 32"><rect x="2" y="2" width="28" height="28" rx="4.4" fill="#fff" stroke="#2e3247" stroke-width="4"/><path d="M2 4 H30 V10 H2 Z" fill="#2e3247"/><path d="M4.6 5.3 H27.4" stroke="#c5c7dc" stroke-width="1.7"/><path d="M8.2 14.9 H11.4 M13.3 14.9 H16.6 M18.4 14.9 H23.5 M8.2 19 H12.4 M14.2 19 H18.4 M8.2 23 H15.6 M17 23 H22.6" stroke="#2e3247" stroke-width="2"/></svg>
<svg class="a" style="left:2645px;top:1208px;" width="32" height="32" viewBox="0 0 32 32"><rect x="1.8" y="1.8" width="28.4" height="28.4" rx="2.2" fill="#fff" stroke="#b4b7ce" stroke-width="3.6"/><path d="M3.5 22 L10.5 14.5 L17.5 22 L23.5 17 L28.5 22.5 V28.5 H3.5 Z" fill="#cbcddf"/><path d="M3.5 20.5 L10.5 13.5 L18 21.5 L23.5 16.5 L28.5 21.5" fill="none" stroke="#b4b7ce" stroke-width="3" stroke-linejoin="round"/><circle cx="22" cy="9.6" r="3.9" fill="#b4b7ce"/></svg>
<svg class="a" style="left:2732.6px;top:1212px;" width="33" height="24" viewBox="0 0 33 24"><path d="M23.5 8.2 L28.5 5 Q31.6 4.2 31.6 7 V17 Q31.6 19.8 28.5 19 L23.5 15.8 Z" fill="#c4c6da" stroke="#b4b7ce" stroke-width="2.2" stroke-linejoin="round"/><rect x="1.7" y="1.7" width="21.4" height="20.6" rx="5" fill="#cbcde0" stroke="#b4b7ce" stroke-width="3.4"/></svg>
<div class="a" style="left:686px;top:1291px;width:60px;height:132px;background:#1fa971;border-bottom:2px solid #a5e6cb"></div>
<div class="a" style="left:746px;top:1421px;width:2054px;height:2px;background:#e4e6ee"></div>
<svg class="a" style="left:704px;top:1347px;" width="24" height="19.2" viewBox="0 0 16 12.8"><path d="M0.9 7 L2.9 4.9 L5.9 7.9 L13.1 0.8 L15.1 2.8 L5.9 12 Z" fill="#fff" stroke="#fff" stroke-width="1.6" stroke-linejoin="round"/></svg>
<div class="t" style="left:775.6px;top:1317.7px;line-height:40px;font-family:'Liberation Mono',monospace;font-size:25px;letter-spacing:-0.66px;color:#2e3247">2-advanced-examples/cypress_api.cy.js</div>
<div class="a" style="left:1716px;top:1365px;width:7px;height:30px;background:#1fa971"></div>
<div class="a" style="left:1725px;top:1365px;width:2px;height:30px;background:#1fa971"></div>
<div class="a" style="left:1729px;top:1365px;width:2px;height:30px;background:#1fa971"></div>
<div class="a" style="left:1733px;top:1365px;width:3px;height:30px;background:#1fa971"></div>
<div class="a" style="left:1738px;top:1365px;width:2px;height:30px;background:#1fa971"></div>
<div class="a" style="left:1742px;top:1365px;width:4px;height:30px;background:#1fa971"></div>
<div class="a" style="left:1748px;top:1365px;width:2px;height:30px;background:#1fa971"></div>
<div class="a" style="left:1752px;top:1365px;width:2px;height:30px;background:#1fa971"></div>
<div class="a" style="left:1756px;top:1365px;width:2px;height:30px;background:#1fa971"></div>
<div class="a" style="left:1760px;top:1365px;width:3px;height:30px;background:#1fa971"></div>
<div class="a" style="left:2212.7px;top:1331.3px;width:101px;height:47.4px;border:2px solid #e2e3e9;border-radius:7px;background:#fff"></div>
<svg class="a" style="left:2231.8999999999996px;top:1347px;" width="24" height="19.2" viewBox="0 0 16 12.8"><path d="M0.9 7 L2.9 4.9 L5.9 7.9 L13.1 0.8 L15.1 2.8 L5.9 12 Z" fill="#1fa971" stroke="#1fa971" stroke-width="1.6" stroke-linejoin="round"/></svg>
<div class="t" style="right:578.6999999999998px;top:1336.4px;line-height:40px;font-size:30px;color:#747994;letter-spacing:0px">10</div>
<svg class="a" style="left:2375px;top:1341.7px;" width="22.0" height="27.0" viewBox="0 0 22 27"><rect x="6.2" y="0.3" width="9.6" height="2.8" rx="1.3" fill="#5a5f7a"/><rect x="9.2" y="1.5" width="3.6" height="5" fill="#5a5f7a"/><path d="M3.2 7.6 L4.6 9 M18.8 7.6 L17.4 9" stroke="#5a5f7a" stroke-width="3" stroke-linecap="round"/><circle cx="11" cy="16.1" r="8.5" fill="#d0d3e8" stroke="#5a5f7a" stroke-width="3.3"/><path d="M10.4 16.9 L14.2 12.9" stroke="#5a5f7a" stroke-width="3" stroke-linecap="round"/></svg>
<div class="t" style="left:2406.39px;top:1336.4px;line-height:40px;font-size:26px;color:#5a5f7a;letter-spacing:2.0px;font-weight:400;">00:08</div>
<svg class="a" style="left:2557px;top:1340px;" width="32" height="32" viewBox="0 0 32 32"><rect x="2" y="2" width="28" height="28" rx="4.4" fill="#fff" stroke="#2e3247" stroke-width="4"/><path d="M2 4 H30 V10 H2 Z" fill="#2e3247"/><path d="M4.6 5.3 H27.4" stroke="#c5c7dc" stroke-width="1.7"/><path d="M8.2 14.9 H11.4 M13.3 14.9 H16.6 M18.4 14.9 H23.5 M8.2 19 H12.4 M14.2 19 H18.4 M8.2 23 H15.6 M17 23 H22.6" stroke="#2e3247" stroke-width="2"/></svg>
<svg class="a" style="left:2645px;top:1340px;" width="32" height="32" viewBox="0 0 32 32"><rect x="1.8" y="1.8" width="28.4" height="28.4" rx="2.2" fill="#fff" stroke="#b4b7ce" stroke-width="3.6"/><path d="M3.5 22 L10.5 14.5 L17.5 22 L23.5 17 L28.5 22.5 V28.5 H3.5 Z" fill="#cbcddf"/><path d="M3.5 20.5 L10.5 13.5 L18 21.5 L23.5 16.5 L28.5 21.5" fill="none" stroke="#b4b7ce" stroke-width="3" stroke-linejoin="round"/><circle cx="22" cy="9.6" r="3.9" fill="#b4b7ce"/></svg>
<svg class="a" style="left:2732.6px;top:1344px;" width="33" height="24" viewBox="0 0 33 24"><path d="M23.5 8.2 L28.5 5 Q31.6 4.2 31.6 7 V17 Q31.6 19.8 28.5 19 L23.5 15.8 Z" fill="#c4c6da" stroke="#b4b7ce" stroke-width="2.2" stroke-linejoin="round"/><rect x="1.7" y="1.7" width="21.4" height="20.6" rx="5" fill="#cbcde0" stroke="#b4b7ce" stroke-width="3.4"/></svg>
<div class="a" style="left:686px;top:1423px;width:60px;height:132px;background:#1fa971;border-bottom:2px solid #a5e6cb"></div>
<div class="a" style="left:746px;top:1553px;width:2054px;height:2px;background:#e4e6ee"></div>
<svg class="a" style="left:704px;top:1479px;" width="24" height="19.2" viewBox="0 0 16 12.8"><path d="M0.9 7 L2.9 4.9 L5.9 7.9 L13.1 0.8 L15.1 2.8 L5.9 12 Z" fill="#fff" stroke="#fff" stroke-width="1.6" stroke-linejoin="round"/></svg>
<div class="t" style="left:775.6px;top:1449.7px;line-height:40px;font-family:'Liberation Mono',monospace;font-size:25px;letter-spacing:-0.66px;color:#2e3247">2-advanced-examples/files.cy.js</div>
<div class="a" style="left:1855px;top:1497px;width:7px;height:30px;background:#1fa971"></div>
<div class="a" style="left:1864px;top:1497px;width:2px;height:30px;background:#1fa971"></div>
<div class="a" style="left:1868px;top:1497px;width:2px;height:30px;background:#1fa971"></div>
<div class="a" style="left:1872px;top:1497px;width:4px;height:30px;background:#1fa971"></div>
<div class="a" style="left:2224.7px;top:1463.3px;width:89px;height:47.4px;border:2px solid #e2e3e9;border-radius:7px;background:#fff"></div>
<svg class="a" style="left:2243.8999999999996px;top:1479px;" width="24" height="19.2" viewBox="0 0 16 12.8"><path d="M0.9 7 L2.9 4.9 L5.9 7.9 L13.1 0.8 L15.1 2.8 L5.9 12 Z" fill="#1fa971" stroke="#1fa971" stroke-width="1.6" stroke-linejoin="round"/></svg>
<div class="t" style="right:578.6999999999998px;top:1468.4px;line-height:40px;font-size:30px;color:#747994;letter-spacing:0px">4</div>
<svg class="a" style="left:2375px;top:1473.7px;" width="22.0" height="27.0" viewBox="0 0 22 27"><rect x="6.2" y="0.3" width="9.6" height="2.8" rx="1.3" fill="#5a5f7a"/><rect x="9.2" y="1.5" width="3.6" height="5" fill="#5a5f7a"/><path d="M3.2 7.6 L4.6 9 M18.8 7.6 L17.4 9" stroke="#5a5f7a" stroke-width="3" stroke-linecap="round"/><circle cx="11" cy="16.1" r="8.5" fill="#d0d3e8" stroke="#5a5f7a" stroke-width="3.3"/><path d="M10.4 16.9 L14.2 12.9" stroke="#5a5f7a" stroke-width="3" stroke-linecap="round"/></svg>
<div class="t" style="left:2406.39px;top:1468.4px;line-height:40px;font-size:26px;color:#5a5f7a;letter-spacing:2.0px;font-weight:400;">00:05</div>
<svg class="a" style="left:2557px;top:1472px;" width="32" height="32" viewBox="0 0 32 32"><rect x="2" y="2" width="28" height="28" rx="4.4" fill="#fff" stroke="#2e3247" stroke-width="4"/><path d="M2 4 H30 V10 H2 Z" fill="#2e3247"/><path d="M4.6 5.3 H27.4" stroke="#c5c7dc" stroke-width="1.7"/><path d="M8.2 14.9 H11.4 M13.3 14.9 H16.6 M18.4 14.9 H23.5 M8.2 19 H12.4 M14.2 19 H18.4 M8.2 23 H15.6 M17 23 H22.6" stroke="#2e3247" stroke-width="2"/></svg>
<svg class="a" style="left:2645px;top:1472px;" width="32" height="32" viewBox="0 0 32 32"><rect x="1.8" y="1.8" width="28.4" height="28.4" rx="2.2" fill="#fff" stroke="#b4b7ce" stroke-width="3.6"/><path d="M3.5 22 L10.5 14.5 L17.5 22 L23.5 17 L28.5 22.5 V28.5 H3.5 Z" fill="#cbcddf"/><path d="M3.5 20.5 L10.5 13.5 L18 21.5 L23.5 16.5 L28.5 21.5" fill="none" stroke="#b4b7ce" stroke-width="3" stroke-linejoin="round"/><circle cx="22" cy="9.6" r="3.9" fill="#b4b7ce"/></svg>
<svg class="a" style="left:2732.6px;top:1476px;" width="33" height="24" viewBox="0 0 33 24"><path d="M23.5 8.2 L28.5 5 Q31.6 4.2 31.6 7 V17 Q31.6 19.8 28.5 19 L23.5 15.8 Z" fill="#c4c6da" stroke="#b4b7ce" stroke-width="2.2" stroke-linejoin="round"/><rect x="1.7" y="1.7" width="21.4" height="20.6" rx="5" fill="#cbcde0" stroke="#b4b7ce" stroke-width="3.4"/></svg>
<div class="a" style="left:686px;top:1555px;width:60px;height:40px;background:#e45770"></div>
<div class="a" style="left:2330px;top:499px;width:2px;height:1091px;background:#f4f6fa"></div>
<div class="a" style="left:2520.5px;top:499px;width:2px;height:1091px;background:#f4f6fa"></div>
<div class="a" style="left:2799px;top:499px;width:2px;height:1091px;background:#f3f4f8"></div>
<div class="a" style="left:2848px;top:207px;width:30px;height:1383px;background:#fafafa;border-left:2px solid #e8e8e8"></div>
<div class="a" style="left:2856.2px;top:253px;width:15.8px;height:568px;border-radius:8px;background:#c1c1c1"></div>
<div class="a" style="left:2681px;top:1465px;width:78px;height:78px;border-radius:50%;background:rgba(208,205,222,.55)"></div>
<div class="a" style="left:2718px;top:1482px;width:112px;height:112px;border-radius:50%;background:#c4a7f6;box-shadow:0 2px 10px rgba(60,40,100,.18)"></div>
<div class="a" style="left:2694px;top:1479px;width:54px;height:54px;border-radius:50%;background:#4c1d8c"></div>
<div class="t" style="left:2711.4px;top:1486.0px;line-height:40px;font-size:28px;color:#fff;letter-spacing:0px;font-weight:400;-webkit-text-stroke:0.5px #fff;">1</div>
<svg class="a" style="left:2754px;top:1515px;" width="40" height="44" viewBox="0 0 40 44"><rect x="2.5" y="2.5" width="35" height="39" rx="1" fill="#9b6be6" stroke="#5b2ba8" stroke-width="5"/><path d="M5 33 H35 V39 H5 Z" fill="#c4a7f6"/><path d="M2.5 31.5 H37.5" stroke="#5b2ba8" stroke-width="4"/><path d="M12 11 H28 M12 17.5 H27" stroke="#5b2ba8" stroke-width="3.2" stroke-linecap="round"/></svg>
<div class="a" style="left:0;top:0;width:638px;height:1590px;background:#1b1e2e"></div>
<div class="a" style="left:0;top:124px;width:638px;height:385px;background:#151722"></div>
<div class="a" style="left:0;top:122.5px;width:638px;height:2.5px;background:#2b2e40"></div>
<div class="a" style="left:0;top:125px;width:638px;height:5px;background:linear-gradient(180deg,#0b0d1a,rgba(11,13,26,0))"></div>
<div class="a" style="left:24px;top:19px;width:22px;height:22px;background:#222434"></div>
<div class="a" style="left:46px;top:19px;width:22px;height:22px;background:#8b8d9c"></div>
<div class="a" style="left:68px;top:19px;width:22px;height:22px;background:#676979"></div>
<div class="a" style="left:90px;top:19px;width:22px;height:22px;background:#101222"></div>
<div class="a" style="left:112px;top:19px;width:22px;height:22px;background:#343647"></div>
<div class="a" style="left:134px;top:19px;width:22px;height:22px;background:#4a4c5d"></div>
<div class="a" style="left:156px;top:19px;width:22px;height:22px;background:#444656"></div>
<div class="a" style="left:178px;top:19px;width:22px;height:22px;background:#1d1f31"></div>
<div class="a" style="left:24px;top:41px;width:22px;height:22px;background:#8a8c9c"></div>
<div class="a" style="left:46px;top:41px;width:22px;height:22px;background:#d9dbe6"></div>
<div class="a" style="left:68px;top:41px;width:22px;height:22px;background:#d5d7e3"></div>
<div class="a" style="left:90px;top:41px;width:22px;height:22px;background:#404253"></div>
<div class="a" style="left:112px;top:41px;width:22px;height:22px;background:#444656"></div>
<div class="a" style="left:134px;top:41px;width:22px;height:22px;background:#6f7181"></div>
<div class="a" style="left:156px;top:41px;width:22px;height:22px;background:#636575"></div>
<div class="a" style="left:178px;top:41px;width:22px;height:22px;background:#1d1f31"></div>
<div class="a" style="left:24px;top:63px;width:22px;height:22px;background:#6b6d7d"></div>
<div class="a" style="left:46px;top:63px;width:22px;height:22px;background:#dcdeea"></div>
<div class="a" style="left:68px;top:63px;width:22px;height:22px;background:#bdbfcb"></div>
<div class="a" style="left:90px;top:63px;width:22px;height:22px;background:#2f3143"></div>
<div class="a" style="left:112px;top:63px;width:22px;height:22px;background:#232538"></div>
<div class="a" style="left:134px;top:63px;width:22px;height:22px;background:#25273a"></div>
<div class="a" style="left:156px;top:63px;width:22px;height:22px;background:#25273a"></div>
<div class="a" style="left:24px;top:85px;width:22px;height:22px;background:#1a1c2c"></div>
<div class="a" style="left:46px;top:85px;width:22px;height:22px;background:#4b4d5d"></div>
<div class="a" style="left:68px;top:85px;width:22px;height:22px;background:#313345"></div>
<div class="a" style="left:90px;top:85px;width:22px;height:22px;background:#15172a"></div>
<div class="a" style="left:112px;top:85px;width:22px;height:22px;background:#2a2c3f"></div>
<div class="a" style="left:134px;top:85px;width:22px;height:22px;background:#2c2e42"></div>
<div class="a" style="left:156px;top:85px;width:22px;height:22px;background:#2d2f43"></div>
<div class="a" style="left:178px;top:63px;width:22px;height:22px;background:#2b2d41"></div>
<div class="a" style="left:178px;top:85px;width:22px;height:22px;background:#2e3045"></div>
<div class="a" style="left:200px;top:63px;width:22px;height:22px;background:#2b2d41"></div>
<div class="a" style="left:200px;top:85px;width:22px;height:22px;background:#2e3045"></div>
<div class="a" style="left:222px;top:63px;width:22px;height:22px;background:#2f3146"></div>
<div class="a" style="left:222px;top:85px;width:22px;height:22px;background:#33364b"></div>
<div class="a" style="left:244px;top:63px;width:22px;height:22px;background:#2f3146"></div>
<div class="a" style="left:244px;top:85px;width:22px;height:22px;background:#33364b"></div>
<div class="a" style="left:266px;top:63px;width:22px;height:22px;background:#2f3146"></div>
<div class="a" style="left:266px;top:85px;width:22px;height:22px;background:#33364b"></div>
<div class="a" style="left:200px;top:19px;width:22px;height:22px;background:#181a29"></div>
<div class="a" style="left:200px;top:41px;width:22px;height:22px;background:#181a29"></div>
<div class="a" style="left:222px;top:19px;width:22px;height:22px;background:#181a29"></div>
<div class="a" style="left:222px;top:41px;width:22px;height:22px;background:#181a29"></div>
<div class="a" style="left:244px;top:19px;width:22px;height:22px;background:#181a29"></div>
<div class="a" style="left:244px;top:41px;width:22px;height:22px;background:#181a29"></div>
<div class="a" style="left:266px;top:19px;width:22px;height:22px;background:#181a29"></div>
<div class="a" style="left:266px;top:41px;width:22px;height:22px;background:#181a29"></div>
<div class="a" style="left:288px;top:19px;width:22px;height:22px;background:#181a29"></div>
<div class="a" style="left:288px;top:41px;width:22px;height:22px;background:#181a29"></div>
<div class="a" style="left:310px;top:19px;width:22px;height:22px;background:#181a29"></div>
<div class="a" style="left:310px;top:41px;width:22px;height:22px;background:#181a29"></div>
<div class="a" style="left:46px;top:107px;width:44px;height:9px;background:#15172a"></div>
<svg class="a" style="left:564.5px;top:49px;" width="29" height="17" viewBox="0 0 29 17"><path d="M1.8 1.8 L14.5 14.6 L27.2 1.8" fill="none" stroke="#8d90a6" stroke-width="2.6" stroke-linecap="round" stroke-linejoin="miter"/></svg>
<svg class="a" style="left:38px;top:155px;" width="88" height="88" viewBox="0 0 88 88"><circle cx="44" cy="44" r="39.2" fill="none" stroke="#434861" stroke-width="9.6"/><circle cx="44" cy="44" r="39.2" fill="none" stroke="#1fa971" stroke-width="9.6" stroke-dasharray="165.02 246.30" transform="rotate(-90 44 44)"/></svg>
<div class="t" style="left:55.83px;top:179.5px;line-height:40px;font-size:25px;color:#1fa971;letter-spacing:2.3px;font-weight:700;">67%</div>
<div class="t" style="left:143.56px;top:178.6px;line-height:40px;font-size:32px;color:#fff;letter-spacing:0.34px;font-weight:400;">Onboarding progress</div>
<svg class="a" style="left:459.5px;top:187.5px;" width="23.5" height="23.5" viewBox="0 0 24 24"><circle cx="12" cy="12" r="10.2" fill="none" stroke="#fff" stroke-width="2.8"/><circle cx="12" cy="7.4" r="1.7" fill="#fff"/><path d="M9.8 10.6 H13.3 V17.6" fill="none" stroke="#fff" stroke-width="2.4"/><path d="M9 17.4 H15.4" stroke="#fff" stroke-width="2.2"/></svg>
<svg class="a" style="left:126px;top:265.7px;" width="24.5" height="19.6" viewBox="0 0 16 12.8"><path d="M0.9 7 L2.9 4.9 L5.9 7.9 L13.1 0.8 L15.1 2.8 L5.9 12 Z" fill="#1fa971" stroke="#1fa971" stroke-width="1.6" stroke-linejoin="round"/></svg>
<div class="t" style="left:169.6px;top:255.2px;line-height:40px;font-size:28px;color:#c9cbdb;letter-spacing:0.43px;font-weight:400;">Create a project</div>
<svg class="a" style="left:126px;top:349.7px;" width="24.5" height="19.6" viewBox="0 0 16 12.8"><path d="M0.9 7 L2.9 4.9 L5.9 7.9 L13.1 0.8 L15.1 2.8 L5.9 12 Z" fill="#1fa971" stroke="#1fa971" stroke-width="1.6" stroke-linejoin="round"/></svg>
<div class="t" style="left:168.76px;top:339.2px;line-height:40px;font-size:28px;color:#c9cbdb;letter-spacing:0.46px;font-weight:400;">Record a run</div>
<div class="a" style="left:108px;top:411px;width:408px;height:68px;border:3px solid #27ad78;border-radius:10px;background:#2f3249"></div>
<div class="a" style="left:126px;top:433px;width:24.5px;height:24.5px;border-radius:50%;border:4.4px solid #1fa971"></div>
<div class="t" style="left:166.76px;top:425.2px;line-height:40px;font-size:28px;color:#fff;letter-spacing:0.49px;font-weight:400;">Run in GitHub Actions</div>
<svg class="a" style="left:476.5px;top:435.5px;" width="14.4" height="23" viewBox="0 0 14.4 23"><path d="M1.6 1.7 L11.5 11.5 L1.6 21.3" fill="none" stroke="#fff" stroke-width="2.5" stroke-linecap="butt" stroke-linejoin="miter"/></svg>
<svg class="a" style="left:47.5px;top:585.8px;" width="22.3" height="22.3" viewBox="0 0 14 14"><path d="M2.6 0.6 L7 5 L11.4 0.6 L13.4 2.6 L9 7 L13.4 11.4 L11.4 13.4 L7 9 L2.6 13.4 L0.6 11.4 L5 7 L0.6 2.6 Z" fill="#e45770" stroke="#e45770" stroke-width="0.9" stroke-linejoin="round"/></svg>
<div class="t" style="left:108.52px;top:576.0px;line-height:40px;font-size:32px;color:#fff;letter-spacing:-0.2px;font-weight:700;">Kitchen_sink</div>
<svg class="a" style="left:110.5px;top:630.5px;" width="10.5" height="18" viewBox="0 0 10.5 18"><path d="M10 0.8 V17.2 Q10 18.2 9 17.5 L0.6 9.7 Q0 9 0.6 8.3 L9 0.5 Q10 -0.2 10 0.8 Z" fill="#9095ad"/></svg>
<div class="t" style="left:129.0px;top:619.6px;line-height:40px;font-size:28px;color:#9095ad;letter-spacing:0.45px;font-weight:400;">View all projects</div>
<div class="a" style="left:0;top:675.5px;width:5.6px;height:76px;border-radius:0 6px 6px 0;background:#6470f3"></div>
<svg class="a" style="left:47.5px;top:699px;" width="28.5" height="28.5" viewBox="0 0 28 28"><circle cx="14" cy="14" r="14" fill="#9aa2fc"/><path d="M8.2 14.3 L12.3 18.3 L20 10.6" fill="none" stroke="#1b1e2e" stroke-width="3.6" stroke-linecap="round" stroke-linejoin="round"/></svg>
<div class="t" style="left:108.52px;top:693.6px;line-height:40px;font-size:31px;color:#9aa2fc;letter-spacing:1.44px;font-weight:400;">Latest runs</div>
<svg class="a" style="left:45.5px;top:794.5px;" width="33" height="25" viewBox="0 0 33 25"><circle cx="4.6" cy="19.8" r="4" fill="#bfc2d4"/><circle cx="28.4" cy="19.8" r="4" fill="#bfc2d4"/><circle cx="28" cy="5" r="4" fill="#bfc2d4"/><path d="M4.6 19.8 H28.4 M11 19.8 C15 19.8 14.5 5 20 5 H28" fill="none" stroke="#bfc2d4" stroke-width="3.2"/></svg>
<div class="t" style="left:108.52px;top:786.5px;line-height:40px;font-size:31px;color:#bfc2d4;letter-spacing:1.31px;font-weight:400;">Branches</div>
<svg class="a" style="left:47px;top:886.5px;" width="30" height="29" viewBox="0 0 30 29"><path d="M3 18.3 V26.5 M11 8.8 V26.5 M19 14.6 V26.5 M27 2.5 V26.5" stroke="#bfc2d4" stroke-width="4" stroke-linecap="round"/></svg>
<div class="t" style="left:111.0px;top:881.0px;line-height:40px;font-size:31px;color:#bfc2d4;letter-spacing:1.47px;font-weight:400;">Analytics</div>
<div class="a" style="left:61px;top:951px;width:2.4px;height:446px;background:#2a2d40"></div>
<div class="t" style="left:110.76px;top:968.5px;line-height:40px;font-size:28px;color:#b9bcd1;letter-spacing:0.84px;font-weight:400;">Run status</div>
<div class="t" style="left:110.76px;top:1032.0px;line-height:40px;font-size:28px;color:#b9bcd1;letter-spacing:0.9px;font-weight:400;">Run duration</div>
<div class="t" style="left:112.44px;top:1096.0px;line-height:40px;font-size:28px;color:#b9bcd1;letter-spacing:0.88px;font-weight:400;">Test suite size</div>
<div class="t" style="left:112.44px;top:1160.0px;line-height:40px;font-size:28px;color:#b9bcd1;letter-spacing:0.97px;font-weight:400;">Top failures</div>
<div class="t" style="left:111.74px;top:1224.6px;line-height:40px;font-size:28px;color:#b9bcd1;letter-spacing:1.0px;font-weight:400;">Slowest tests</div>
<div class="t" style="left:110.76px;top:1288.6px;line-height:40px;font-size:28px;color:#b9bcd1;letter-spacing:1.14px;font-weight:400;">Most common errors</div>
<div class="t" style="left:110.76px;top:1352.6px;line-height:40px;font-size:28px;color:#b9bcd1;letter-spacing:0.95px;font-weight:400;">Flaky tests</div>
<div class="a" style="left:608px;top:509px;width:30px;height:888.5px;background:#fafafa;border-left:2px solid #ececec"></div>
<div class="a" style="left:616px;top:515px;width:16px;height:769px;border-radius:8px;background:#c1c1c1"></div>
<div class="a" style="left:606px;top:0;width:32px;height:509px;background:linear-gradient(90deg,rgba(6,7,14,0) 0%,rgba(6,7,14,.22) 50%,rgba(6,7,14,.5) 85%,rgba(0,0,4,.85) 100%)"></div>
<div class="a" style="left:622px;top:1397.5px;width:16px;height:193px;background:linear-gradient(90deg,rgba(8,9,16,0) 0%,rgba(8,9,16,.3) 60%,rgba(8,9,16,.8) 100%)"></div>
<svg class="a" style="left:200px;top:1380px" width="240" height="120" viewBox="0 0 240 120">
<defs><linearGradient id="cg" gradientUnits="userSpaceOnUse" x1="58.4" y1="0" x2="90.9" y2="0"><stop offset="0" stop-color="#4fc79a"/><stop offset="0.35" stop-color="#4fc79a"/><stop offset="1" stop-color="#4fc79a" stop-opacity="0"/></linearGradient>
<linearGradient id="cg2" gradientUnits="userSpaceOnUse" x1="0" y1="20.4" x2="0" y2="97.4"><stop offset="0" stop-color="#4fc79a"/><stop offset="0.55" stop-color="#55ca9e"/><stop offset="0.8" stop-color="#a5e4cb"/><stop offset="1" stop-color="#f2fcf8"/></linearGradient>
<clipPath id="yc"><rect x="0" y="45.4" width="240" height="100"/></clipPath></defs>
<path d="M58.40 20.80 A37.6 37.6 0 0 1 89.93 37.92" fill="none" stroke="url(#cg)" stroke-width="5.6"/>
<path d="M58.90 20.80 A37.6 37.6 0 1 0 61.02 95.91" fill="none" stroke="url(#cg2)" stroke-width="5.6"/>
<g clip-path="url(#yc)"><path d="M58.02 96.11 Q64.30 98.40 66.00 92.60 L85.50 40.30" fill="none" stroke="#fff" stroke-width="6.6" stroke-linejoin="round"/>
<path d="M61.50 40.30 L74.40 72.00" fill="none" stroke="#fff" stroke-width="6.8"/></g>
</svg>
<div class="t" style="left:230px;top:1404.7px;line-height:60px;font-size:50px;font-weight:700;color:#fff">c</div>
<div class="t" style="left:286.9px;top:1404.7px;line-height:60px;font-size:50px;font-weight:700;color:#fff">p</div>
<div class="t" style="left:315.4px;top:1404.7px;line-height:60px;font-size:50px;font-weight:700;color:#fff">r</div>
<div class="t" style="left:331.9px;top:1404.7px;line-height:60px;font-size:50px;font-weight:700;color:#fff">e</div>
<div class="t" style="left:361.3px;top:1404.7px;line-height:60px;font-size:50px;font-weight:700;color:#fff">s</div>
<div class="t" style="left:390.2px;top:1404.7px;line-height:60px;font-size:50px;font-weight:700;color:#fff">s</div>
<div class="a" style="left:0;top:1527px;width:638px;height:2px;background:#2b2e42"></div>
<svg class="a" style="left:53px;top:1567px;" width="27.5" height="27.5" viewBox="0 0 28 28"><circle cx="14" cy="14" r="12" fill="none" stroke="#fff" stroke-width="3.2"/><path d="M10 11 C10 5.5 18.4 6 18 11 C17.8 13.6 14 13.6 14 16.6" fill="none" stroke="#fff" stroke-width="3" stroke-linecap="round"/><circle cx="14" cy="21" r="1.9" fill="#fff"/></svg>
<div class="t" style="left:95.65px;top:1557.0px;line-height:40px;font-size:30px;color:#fff;letter-spacing:1.33px;font-weight:400;">Support</div>
<svg class="a" style="left:320px;top:1565.5px;" width="30" height="30" viewBox="0 0 30 30"><path d="M9 2 H24.5 Q27.2 2 26.4 4.6 L20 28 H0.5 L6.8 3.8 Q7.3 2 9 2 Z" fill="#fff"/><path d="M27 7.6 L29.8 8.4 L24 28 H21.3 Z" fill="#fff"/><path d="M10.5 7.3 H22.5 M9.3 11.6 H21.3" stroke="#1b1e2e" stroke-width="2.3"/></svg>
<div class="t" style="left:364.6px;top:1557.0px;line-height:40px;font-size:30px;color:#fff;letter-spacing:1.36px;font-weight:400;">Documentation</div>
<div class="a" style="left:-10px;top:1585px;width:2532px;height:12px;border-radius:0 7px 0 0;background:#e1e2e8;border-top:1.5px solid #b9bac2;border-right:1.5px solid #b9bac2;box-shadow:0 -3px 16px rgba(0,0,0,.16)"></div>
</body></html>
